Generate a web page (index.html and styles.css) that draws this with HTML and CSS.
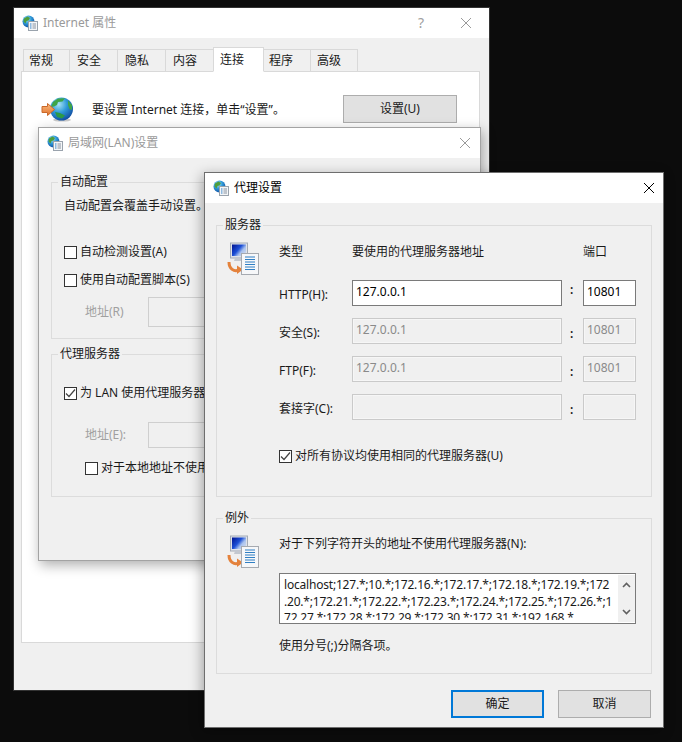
FILE: index.html
```html
<!DOCTYPE html>
<html lang="zh-CN">
<head>
<meta charset="utf-8">
<title>代理设置</title>
<link rel="stylesheet" href="styles.css">
</head>
<body>
<svg class="defs" width="0" height="0" aria-hidden="true">
  <defs>
    <radialGradient id="g-ocean" cx="0.38" cy="0.3" r="0.8">
      <stop offset="0" stop-color="#a8e4f4"/>
      <stop offset="0.45" stop-color="#2f9ad8"/>
      <stop offset="1" stop-color="#0b3f98"/>
    </radialGradient>
    <linearGradient id="g-arrow" x1="0" y1="0" x2="0" y2="1">
      <stop offset="0" stop-color="#fbbd80"/>
      <stop offset="1" stop-color="#e0702a"/>
    </linearGradient>
    <linearGradient id="g-screen" x1="0" y1="0" x2="1" y2="0.7">
      <stop offset="0" stop-color="#00138f"/>
      <stop offset="0.5" stop-color="#1c4fd6"/>
      <stop offset="0.75" stop-color="#a9c2ee"/>
      <stop offset="1" stop-color="#c9d6ee"/>
    </linearGradient>
    <symbol id="i-small" viewBox="0 0 16 16">
      <circle cx="6.500" cy="6.500" r="6" fill="url(#g-ocean)"/>
      <path d="M2 3.500 5.500 1.500 8 3 6.500 5.500 4.500 6 3.500 8.500 1.500 6.500Z" fill="#4f9e3c"/>
      <path d="M7 9.500 10 8 11.500 10 9 12.500 7.500 12Z" fill="#4f9e3c"/>
      <rect x="6.500" y="6.500" width="9" height="9" fill="#f4f6f8" stroke="#9aa3ad"/>
      <path d="M8 9h1.500M8 11h1.500M8 13h1.500" stroke="#2d7fc8" stroke-width="1"/>
      <path d="M10.500 9h3.500M10.500 11h3.500M10.500 13h3.500" stroke="#8a93a0" stroke-width="1"/>
    </symbol>
    <symbol id="i-globe" viewBox="0 0 32 25">
      <ellipse cx="21" cy="23" rx="9" ry="1.600" fill="#c9c9c9"/>
      <circle cx="20.500" cy="12" r="11.500" fill="url(#g-ocean)"/>
      <path d="M12 5 17 1.500 24 1.200 21.500 4.500 17 5 16 8 13 9.500 10 10Z" fill="#3fa548"/>
      <path d="M27 3.500 31 8 31 13 28.500 12 27 8Z" fill="#3fa548"/>
      <path d="M14 15 19 16 24 18.500 21 21.500 16 20Z" fill="#2c9a46"/>
      <path d="M1 9.500H6.500V6.500L13.500 12.500 6.500 18.500V15.500H1Z" fill="url(#g-arrow)" stroke="#c9682a" stroke-width="1"/>
    </symbol>
    <symbol id="i-net" viewBox="0 0 32 33">
      <rect x="3.500" y="1" width="17" height="15" fill="#dfe3ea" stroke="#a4abb6"/>
      <rect x="5" y="2.500" width="14" height="11.500" fill="url(#g-screen)"/>
      <path d="M8 16h8l1 3H7Z" fill="#c3c8d0"/>
      <path d="M2 20C2 27 7 30 12 28" fill="none" stroke="#e4823c" stroke-width="3"/>
      <path d="M10 23.500 16 27.500 10 32Z" fill="#e4823c"/>
      <rect x="14.500" y="11.500" width="17" height="21" fill="#f6f7f9" stroke="#a6aab0"/>
      <path d="M18 15h10M18 17.500h10M18 20h10M18 22.500h10M18 25h10M18 27.500h10" stroke="#2f7fc4" stroke-width="1"/>
    </symbol>
    <symbol id="i-x" viewBox="0 0 12 12">
      <path d="M1 1 11 11M11 1 1 11" fill="none" stroke="currentColor" stroke-width="1"/>
    </symbol>
    <symbol id="i-check" viewBox="0 0 13 13">
      <path d="M2 6.500 5 9.500 11 2.500" fill="none" stroke="#444" stroke-width="1.200"/>
    </symbol>
  </defs>
</svg>

<main class="desktop">
  <!-- Internet 属性 -->
  <section class="win win-props">
    <header class="titlebar inactive">
      <svg class="title-icon"><use href="#i-small"/></svg>
      <span class="title-text">Internet 属性</span>
      <span class="help">?</span>
      <svg class="close"><use href="#i-x"/></svg>
    </header>
    <div class="props-body">
      <nav class="tabs">
        <span class="tab">常规</span>
        <span class="tab">安全</span>
        <span class="tab">隐私</span>
        <span class="tab">内容</span>
        <span class="tab selected">连接</span>
        <span class="tab after">程序</span>
        <span class="tab after">高级</span>
      </nav>
      <div class="tab-panel">
        <svg class="globe-icon"><use href="#i-globe"/></svg>
        <span class="panel-text">要设置 Internet 连接，单击“设置”。</span>
        <span class="btn setup-btn">设置(U)</span>
      </div>
    </div>
  </section>

  <!-- 局域网(LAN)设置 -->
  <section class="win win-lan">
    <header class="titlebar inactive">
      <svg class="title-icon"><use href="#i-small"/></svg>
      <span class="title-text">局域网(LAN)设置</span>
      <svg class="close"><use href="#i-x"/></svg>
    </header>
    <div class="lan-body">
      <fieldset class="group auto-group">
        <legend>自动配置</legend>
        <p class="auto-note">自动配置会覆盖手动设置。</p>
        <label class="check auto-detect"><span class="box"></span>自动检测设置(A)</label>
        <label class="check auto-script"><span class="box"></span>使用自动配置脚本(S)</label>
        <div class="addr-row auto-addr">
          <span class="muted">地址(R)</span>
          <span class="lan-input"></span>
        </div>
      </fieldset>
      <fieldset class="group proxy-group">
        <legend>代理服务器</legend>
        <label class="check use-proxy"><span class="box"><svg class="tick"><use href="#i-check"/></svg></span>为 LAN 使用代理服务器</label>
        <div class="addr-row proxy-addr">
          <span class="muted">地址(E):</span>
          <span class="lan-input short"></span>
        </div>
        <label class="check bypass"><span class="box"></span>对于本地地址不使用</label>
      </fieldset>
    </div>
  </section>

  <!-- 代理设置 -->
  <section class="win win-proxy">
    <header class="titlebar">
      <svg class="title-icon"><use href="#i-small"/></svg>
      <span class="title-text">代理设置</span>
      <svg class="close"><use href="#i-x"/></svg>
    </header>
    <div class="proxy-body">
      <fieldset class="group server-group">
        <legend>服务器</legend>
        <div class="server-layout">
          <svg class="net-icon"><use href="#i-net"/></svg>
          <div class="server-main">
            <div class="server-grid">
              <span class="head">类型</span>
              <span class="head">要使用的代理服务器地址</span>
              <span></span>
              <span class="head">端口</span>

              <span class="label">HTTP(H):</span>
              <span class="field active">127.0.0.1</span>
              <span class="colon first">:</span>
              <span class="field active">10801</span>

              <span class="label">安全(S):</span>
              <span class="field">127.0.0.1</span>
              <span class="colon">:</span>
              <span class="field">10801</span>

              <span class="label">FTP(F):</span>
              <span class="field">127.0.0.1</span>
              <span class="colon">:</span>
              <span class="field">10801</span>

              <span class="label">套接字(C):</span>
              <span class="field"></span>
              <span class="colon">:</span>
              <span class="field"></span>
            </div>
            <label class="check same-all"><span class="box"><svg class="tick"><use href="#i-check"/></svg></span>对所有协议均使用相同的代理服务器(U)</label>
          </div>
        </div>
      </fieldset>
      <fieldset class="group except-group">
        <legend>例外</legend>
        <div class="server-layout">
          <svg class="net-icon except-icon"><use href="#i-net"/></svg>
          <div class="except-main">
            <p class="except-note">对于下列字符开头的地址不使用代理服务器(N):</p>
            <div class="memo">
              <div class="memo-text">localhost;127.*;10.*;172.16.*;172.17.*;172.18.*;172.19.*;172<br>.20.*;172.21.*;172.22.*;172.23.*;172.24.*;172.25.*;172.26.*;1<br>72.27.*;172.28.*;172.29.*;172.30.*;172.31.*;192.168.*</div>
              <div class="scrollbar">
                <svg class="chev" viewBox="0 0 9 6"><path d="M1 5 4.500 1.500 8 5" fill="none" stroke="#606060" stroke-width="1.600"/></svg>
                <svg class="chev" viewBox="0 0 9 6"><path d="M1 1 4.500 4.500 8 1" fill="none" stroke="#606060" stroke-width="1.600"/></svg>
              </div>
            </div>
            <p class="hint">使用分号(;)分隔各项。</p>
          </div>
        </div>
      </fieldset>
      <footer class="actions">
        <span class="btn action default">确定</span>
        <span class="btn action">取消</span>
      </footer>
    </div>
  </section>
</main>
</body>
</html>
```
FILE: styles.css
```css
* { box-sizing: border-box; }
html, body { margin: 0; padding: 0; background: #0c0c0c; }
body {
  font-family: "Noto Sans", "Noto Sans CJK SC", sans-serif;
  font-size: 12px;
  line-height: 16px;
  color: #1a1a1a;
}
.defs { position: absolute; }
p { margin: 0; }

.desktop {
  position: relative;
  width: 682px;
  height: 742px;
  overflow: hidden;
}

/* Windows on the desktop */
.win {
  position: absolute;
  display: flex;
  flex-direction: column;
  background: #f0f0f0;
  border: 1px solid #8c8c8c;
}
.win-props { left: 13px; top: 7px; width: 477px; height: 684px; border-color: #333; }
.win-lan {
  left: 38px; top: 127px; width: 443px; height: 434px;
  border-color: #a3a3a3;
  box-shadow: 2px 4px 12px rgba(0, 0, 0, .32);
}
.win-proxy {
  left: 204px; top: 172px; width: 460px; height: 556px;
  border-color: #6e6e6e;
  box-shadow: -2px 3px 12px rgba(0, 0, 0, .32);
}

.titlebar {
  flex: none;
  display: flex;
  align-items: center;
  height: 30px;
  background: #fff;
  padding: 0 9px 0 8px;
  color: #000;
}
.inactive { color: #9a9a9a; }
.title-icon { width: 16px; height: 16px; margin-right: 5px; flex: none; }
.title-text { flex: 1; }
.help { font-size: 14px; margin-right: 36px; color: #a0a0a0; }
.close { width: 12px; height: 12px; flex: none; }
.win-props .close { margin-right: 8px; }
.win-proxy .close { margin-right: -1px; }

/* Internet properties */
.props-body { flex: 1; padding: 10px 9px 47px 7px; display: flex; flex-direction: column; }
.tabs { display: flex; align-items: flex-end; height: 24px; padding-left: 2px; margin-bottom: -1px; position: relative; }
.tab {
  width: 48px;
  height: 23px;
  padding: 3px 0 0 7px;
  background: #f0f0f0;
  border: 1px solid #d9d9d9;
  border-left-width: 0;
}
.tab:first-child { border-left-width: 1px; width: 47px; padding-left: 5px; }
.tab.after { width: 47px; padding-left: 5px; }
.tab.after:last-child { padding-left: 6px; }
.tab.selected {
  width: 51px;
  height: 25px;
  padding: 4px 0 0 6px;
  background: #fff;
  border-bottom-color: #fff;
  border-left-width: 1px;
  margin-left: -1px;
  position: relative;
}
.tab-panel {
  flex: 1;
  background: #fff;
  border: 1px solid #d9d9d9;
  display: flex;
  align-items: flex-start;
  padding: 23px 22px 0 19px;
}
.globe-icon { width: 32px; height: 25px; flex: none; margin-right: 19px; margin-top: 2px; }
.panel-text { flex: 1; padding-top: 7px; }
.btn {
  display: flex;
  align-items: center;
  justify-content: center;
  background: #e1e1e1;
  border: 1px solid #adadad;
  color: #1a1a1a;
}
.setup-btn { width: 114px; height: 28px; }

/* Shared group boxes */
.group {
  margin: 0;
  min-width: 0;
  border: 1px solid #dcdcdc;
  padding: 0;
}
.group legend { padding: 0 2px; margin-left: 6px; line-height: 16px; }

.check { display: flex; align-items: center; gap: 3px; white-space: nowrap; }
.box {
  width: 13px;
  height: 13px;
  flex: none;
  border: 1px solid #333;
  background: #fff;
  display: block;
  position: relative;
}
.tick { position: absolute; left: -1px; top: -1px; width: 13px; height: 13px; }
.muted { color: #a0a0a0; }

/* LAN settings */
.lan-body { flex: 1; padding: 16px 0 0 12px; overflow: hidden; }
.auto-group, .proxy-group { width: 420px; padding-left: 12px; }
.auto-group legend, .proxy-group legend { margin-left: -6px; }
.auto-group { height: 165px; padding-top: 8px; }
.auto-note { margin-bottom: 30px; }
.auto-detect { margin-bottom: 12px; }
.auto-script { margin-bottom: 9px; }
.addr-row { display: flex; align-items: center; }
.addr-row .muted { box-sizing: content-box; width: 42px; padding-left: 21px; margin-right: 21px; }
.lan-input { display: block; width: 200px; height: 30px; background: #f0f0f0; border: 1px solid #cfcfcf; }
.lan-input.short { height: 26px; }
.proxy-group { height: 151px; margin-top: 7px; padding-top: 23px; }
.use-proxy { margin-bottom: 21px; }
.proxy-addr { margin-bottom: 12px; }
.bypass { margin-left: 21px; }

/* Proxy settings */
.proxy-body { flex: 1; display: flex; flex-direction: column; padding: 14px 11px 10px 11px; }
.server-group { height: 280px; flex: none; }
.server-layout { display: flex; }
.net-icon { width: 32px; height: 33px; flex: none; margin: 9px 20px 0 10px; }
.server-main { flex: 1; padding-top: 11px; }
.server-grid {
  display: grid;
  grid-template-columns: 73px 210px 21px 53px;
  grid-template-rows: 24px repeat(4, 26px);
  row-gap: 12px;
  align-items: center;
}
.server-grid .head { align-self: start; }
.label { padding-top: 4px; }
.field {
  display: flex;
  align-items: flex-start;
  height: 26px;
  padding: 3px 0 0 3px;
  border: 1px solid #cacaca;
  background: #f0f0f0;
  color: #8a8a8a;
  box-shadow: inset 0 0 0 1px #f6f6f6;
}
.field.active { border-color: #7a7a7a; background: #fff; color: #000; box-shadow: none; }
.colon { align-self: start; padding: 8px 0 0 8px; font-weight: 600; }
.colon.first { padding-top: 2px; }
.same-all { margin-top: 28px; }

.except-group { height: 164px; flex: none; margin-top: 13px; }
.except-icon { margin-top: 9px; }
.except-main { flex: 1; padding-top: 10px; }
.memo {
  display: flex;
  width: 357px;
  height: 51px;
  margin-top: 21px;
  background: #fff;
  border: 1px solid #7a7a7a;
  overflow: hidden;
}
.memo-text {
  flex: 1;
  padding: 3px 0 0 4px;
  white-space: nowrap;
  line-height: 16.5px;
  letter-spacing: -.2px;
  overflow: hidden;
  height: 46px;
  color: #1a1a1a;
}
.scrollbar {
  flex: none;
  width: 17px;
  margin: 1px 0;
  background: #f0f0f0;
  display: flex;
  flex-direction: column;
  justify-content: space-between;
  align-items: center;
  padding: 7px 0;
}
.chev { width: 9px; height: 6px; }
.hint { margin-top: 14px; }

.actions { display: flex; justify-content: flex-end; gap: 14px; margin: 16px 1px 0 0; }
.action { width: 93px; height: 28px; }
.action.default { border: 2px solid #0078d7; }
```
